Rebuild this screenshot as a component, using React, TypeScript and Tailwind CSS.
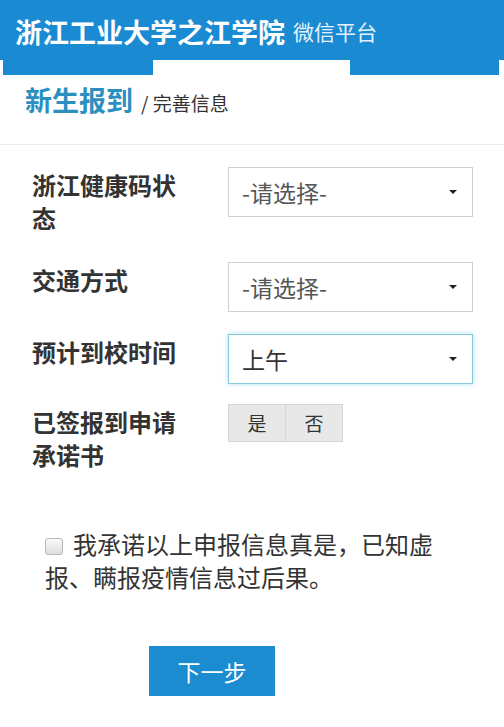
import { useState } from "react";

const font = { fontFamily: '"Noto Sans CJK SC", "Noto Sans", sans-serif' };

function Select({ value, focused }: { value: string; focused?: boolean }) {
  return (
    <div
      className={
        "flex h-[50px] w-[245px] items-center justify-between pl-[13px] pr-[15px] text-[23px] " +
        (focused
          ? "border border-[#86c9d9] text-[#333] shadow-[0_0_5px_rgba(102,200,225,0.55)]"
          : "border border-[#d0d0d0] text-[#555]")
      }
    >
      <span>{value}</span>
      <span className="h-0 w-0 border-x-[4px] border-t-[4px] border-x-transparent border-t-[#222]" />
    </div>
  );
}

function Row({
  label,
  className,
  children,
}: {
  label: string;
  className: string;
  children: React.ReactNode;
}) {
  return (
    <div className={"flex items-start " + className}>
      <div className="w-[228px] shrink-0 pl-[32px] pr-[48px] pt-[1px] text-[24px] font-bold leading-[33px] text-[#333]">
        {label}
      </div>
      {children}
    </div>
  );
}

export default function App() {
  const [signed, setSigned] = useState<"yes" | "no" | null>(null);
  const [agree, setAgree] = useState(false);

  return (
    <div className="min-h-[727px] w-[504px] bg-white" style={font}>
      <header className="flex h-[60px] items-center bg-[#1a8bd3] pl-[15px] pt-[3px] text-white">
        <span className="text-[27px] font-bold leading-none">浙江工业大学之江学院</span>
        <span className="ml-[8px] text-[21px] leading-none text-[#e6f3fb]">微信平台</span>
      </header>
      <div className="flex h-[15px] pl-[3px] pr-[5px]">
        <div className="w-[150px] bg-[#1a8bd3]" />
        <div className="w-[197px]" />
        <div className="flex-1 bg-[#1a8bd3]" />
      </div>

      <div className="h-[70px] border-b border-[#ececec] pl-[25px] pt-[9px] leading-[32px]">
        <span className="text-[27px] font-bold text-[#2b8fbf]">新生报到</span>
        <span className="ml-[8px] text-[19px] text-[#333]">/ 完善信息</span>
      </div>

      <Row label="浙江健康码状态" className="mt-[22px]">
        <Select value="-请选择-" />
      </Row>
      <Row label="交通方式" className="mt-[28px]">
        <Select value="-请选择-" />
      </Row>
      <Row label="预计到校时间" className="mt-[22px]">
        <Select value="上午" focused />
      </Row>
      <Row label="已签报到申请承诺书" className="mt-[20px]">
        <div className="flex h-[38px] border border-[#d6d6d6] bg-[#e8e8e8] text-[19px] text-[#333]">
          <button
            className={"w-[57px] border-r border-[#d6d6d6] " + (signed === "yes" ? "bg-[#d4d4d4]" : "")}
            onClick={() => setSigned("yes")}
          >
            是
          </button>
          <button
            className={"w-[56px] " + (signed === "no" ? "bg-[#d4d4d4]" : "")}
            onClick={() => setSigned("no")}
          >
            否
          </button>
        </div>
      </Row>

      <p className="mt-[56px] w-[460px] pl-[45px] text-[24px] leading-[33px] text-[#333]">
        <span
          className="mr-[10px] inline-block h-[17px] w-[18px] cursor-pointer rounded-[3px] border border-[#b9b9b9] bg-gradient-to-b from-[#fafafa] to-[#dedede] align-[-1px]"
          onClick={() => setAgree(!agree)}
        >
          {agree ? <span className="block text-center text-[12px] leading-[15px]">✓</span> : null}
        </span>
        我承诺以上申报信息真是，已知虚报、瞒报疫情信息过后果。
      </p>

      <div className="mt-[53px] pl-[149px]">
        <button className="h-[50px] w-[126px] bg-[#1a8ccf] text-[23px] text-white">下一步</button>
      </div>
    </div>
  );
}
